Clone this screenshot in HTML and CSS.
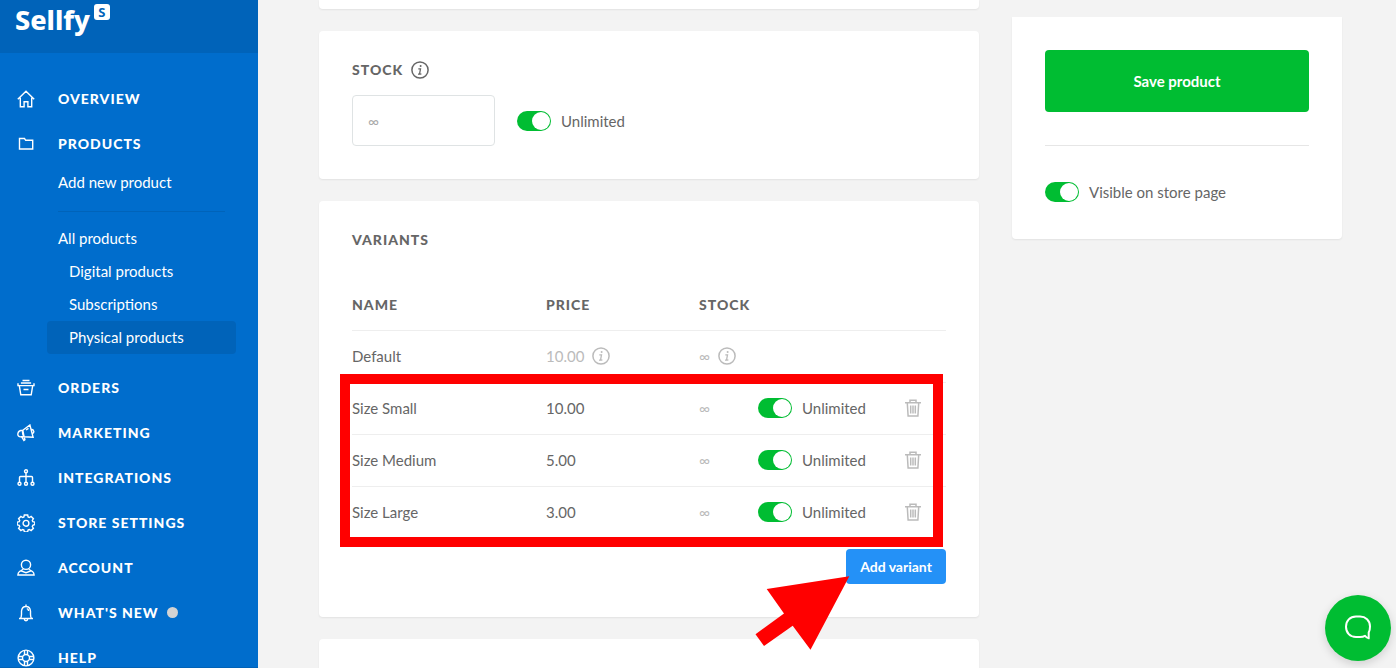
FILE: index.html
```html
<!DOCTYPE html>
<html lang="en">
<head>
<meta charset="utf-8">
<title>Sellfy – Physical products</title>
<link rel="stylesheet" href="styles.css">
</head>
<body>
<svg class="defs" aria-hidden="true">
  <symbol id="info" viewBox="0 0 18 18">
    <circle cx="9" cy="9" r="8.1" fill="none" stroke="currentColor" stroke-width="1.5"/>
    <circle cx="9.6" cy="5" r="1" fill="currentColor"/>
    <path d="M7.3 7.9h2.2L8.6 12.6q-.1.7.6.6l1.2-.3M7 13.1h1.8" fill="none" stroke="currentColor" stroke-width="1.3"/>
  </symbol>
  <symbol id="trash" viewBox="0 0 16 18">
    <path d="M0 3.700h16M5 3.400V1.200h6v2.200M2.300 4l.8 13h9.800l.8-13M5.700 6.500v8M8 6.500v8M10.300 6.500v8" fill="none" stroke="currentColor" stroke-width="1.5"/>
  </symbol>
</svg>
<div class="app">
  <aside class="sidebar">
    <header class="brand">
      <a class="logo" href="#"><span class="logo-word">Sellfy</span><span class="logo-badge">S</span></a>
    </header>
    <nav class="nav">
      <a class="nav-item" href="#"><svg class="icon" viewBox="0 0 18 18"><path d="M.8 9.300 9 1.200l8.200 8.100M3.300 7.800v9h3.800v-5h3.800v5h3.800v-9"/></svg>Overview</a>
      <a class="nav-item" href="#"><svg class="icon" viewBox="0 0 18 18"><path d="M2.500 14V3.500h5l1.200 1.800h7V14z"/></svg>Products</a>
      <div class="subnav">
        <a class="sub-item" href="#">Add new product</a>
        <hr class="sub-rule">
        <a class="sub-item" href="#">All products</a>
        <a class="sub-item sub-item-nested" href="#">Digital products</a>
        <a class="sub-item sub-item-nested" href="#">Subscriptions</a>
        <a class="sub-item sub-item-nested sub-item-active" href="#">Physical products</a>
      </div>
      <a class="nav-item" href="#"><svg class="icon" viewBox="0 0 18 18"><path d="M5.500 1.500h7M3.900 4h10.200M1 4.300v2.300h16V4.300M2.300 6.600l1.500 9.200h10.400l1.500-9.200M6.500 10.500h5"/></svg>Orders</a>
      <a class="nav-item" href="#"><svg class="icon" viewBox="0 0 18 18"><path d="M5.800 6.200 12.900 1l3.200 12.300-9-.5zM5.800 6.200C-.5 6.300-.5 13.300 4 12.800l3.100 0M5.800 6.200q-1 3.500 1.300 6.600M4.700 12.900l2.200 3.600 1-.8-.7-2.700M14.300 5.300c3 .2 3.300 3.600 1 4.300M9 6l2.500-1.600"/></svg>Marketing</a>
      <a class="nav-item" href="#"><svg class="icon" viewBox="0 0 18 18"><circle cx="9" cy="2.300" r="1.500"/><path d="M9 3.800v9.400M2.500 13.200V8.500q0-1 1-1h11q1 0 1 1v4.700"/><circle cx="2.500" cy="14.800" r="1.500"/><circle cx="9" cy="14.800" r="1.500"/><circle cx="15.500" cy="14.800" r="1.500"/></svg>Integrations</a>
      <a class="nav-item" href="#"><svg class="icon" viewBox="0 0 18 18"><path d="M7.300 1h3.400l.4 2 1.200.5 1.800-1.100 2.300 2.300-1.100 1.800.5 1.200 2 .4v2.400l-2 .8-.5 1.200 1.100 1.800-2.300 2.300-1.800-1.100-1.200.5-.5 1.900H7.400l-.5-1.900-1.200-.5-1.800 1.100-2.300-2.300 1.100-1.800-.5-1.200-2-.4V8.100l2-.4.5-1.200-1.100-1.800 2.300-2.300 1.800 1.100L6.900 3z"/><circle cx="9" cy="9.300" r="2.900"/></svg>Store settings</a>
      <a class="nav-item" href="#"><svg class="icon" viewBox="0 0 18 18"><circle cx="9" cy="5.800" r="4.600"/><path d="M6.300 10.300 2.500 12.500Q.9 13.500.9 16h16.200q0-2.500-1.600-3.500l-3.800-2.200M4 11.800l5 1.900 5-1.900"/></svg>Account</a>
      <a class="nav-item" href="#"><svg class="icon" viewBox="0 0 18 18"><path d="M9 .5v2M2 14.500h14M3.300 14.500q1.200-1 1.200-4V7Q5 2.500 9 2.500T13.500 7v3.500q0 3 1.200 4M7.200 14.700q.2 2 1.800 2t1.800-2M9.800 4.600q1.700.4 1.800 2.400"/></svg>What's new<span class="dot"></span></a>
      <a class="nav-item" href="#"><svg class="icon" viewBox="0 0 18 18"><circle cx="9" cy="9" r="7.900"/><circle cx="9" cy="9" r="3.500"/><path d="M7.500 1.300v4.500M10.500 1.300v4.500M7.500 12.200v4.500M10.500 12.200v4.500M1.300 7.500h4.500M1.300 10.500h4.500M12.200 7.500h4.500M12.200 10.500h4.500"/></svg>Help</a>
    </nav>
  </aside>

  <main class="content">
    <div class="column">
      <section class="card card-end"></section>

      <section class="card">
        <h2 class="heading">Stock <svg class="info"><use href="#info"/></svg></h2>
        <div class="stock-row">
          <input class="stock-input" type="text" placeholder="∞" aria-label="Stock">
          <label class="switch-label"><input class="switch" type="checkbox" checked>Unlimited</label>
        </div>
      </section>

      <section class="card variants">
        <h2 class="heading">Variants</h2>
        <table class="table">
          <colgroup><col class="col-name"><col class="col-price"><col class="col-stock"><col class="col-switch"><col></colgroup>
          <thead><tr><th>Name</th><th>Price</th><th>Stock</th><th></th><th></th></tr></thead>
          <tbody>
            <tr><td>Default</td><td class="muted"><span class="with-info">10.00 <svg class="info"><use href="#info"/></svg></span></td><td class="muted" colspan="3"><span class="with-info">∞ <svg class="info"><use href="#info"/></svg></span></td></tr>
            <tr><td>Size Small</td><td>10.00</td><td class="muted">∞</td><td><label class="switch-label"><input class="switch" type="checkbox" checked>Unlimited</label></td><td><button class="delete" type="button" aria-label="Delete Size Small"><svg class="trash"><use href="#trash"/></svg></button></td></tr>
            <tr><td>Size Medium</td><td>5.00</td><td class="muted">∞</td><td><label class="switch-label"><input class="switch" type="checkbox" checked>Unlimited</label></td><td><button class="delete" type="button" aria-label="Delete Size Medium"><svg class="trash"><use href="#trash"/></svg></button></td></tr>
            <tr><td>Size Large</td><td>3.00</td><td class="muted">∞</td><td><label class="switch-label"><input class="switch" type="checkbox" checked>Unlimited</label></td><td><button class="delete" type="button" aria-label="Delete Size Large"><svg class="trash"><use href="#trash"/></svg></button></td></tr>
          </tbody>
        </table>
        <div class="actions">
          <button class="button button-blue" type="button">Add variant</button>
          <svg class="arrow" viewBox="0 0 95 74" aria-hidden="true"><path d="M94.300.3 11.700 13 29 37.500.5 58.300 9 70l28.700-20.300 17.800 24z"/></svg>
        </div>
        <div class="highlight"></div>
      </section>

      <section class="card card-start"></section>
    </div>

    <aside class="card save-panel">
      <button class="button button-green" type="button">Save product</button>
      <hr class="rule">
      <label class="switch-label"><input class="switch" type="checkbox" checked>Visible on store page</label>
    </aside>
  </main>
</div>
<button class="chat" type="button" aria-label="Open chat"><svg class="chat-icon" viewBox="0 0 28 28"><path d="M26 12.500C26 6.300 21.500 2.500 16 2.500h-4C6 2.500 2 6.800 2 12.800S6 23 12 23h4q3 0 5-1.200 1.500 2.200 3.700 2.500v-5.800Q26 16 26 12.500z"/></svg></button>
</body>
</html>
```
FILE: styles.css
```css
* { box-sizing: border-box; }

body {
  margin: 0;
  background: #f3f3f3;
  color: #666;
  font: 15px/20px Lato, "Open Sans", sans-serif;
}

a { color: inherit; text-decoration: none; }
button, input { font: inherit; }
.defs { position: absolute; width: 0; height: 0; }

.app { display: flex; height: 100vh; overflow: hidden; }

/* Sidebar */
.sidebar {
  flex: 0 0 258px;
  overflow: hidden;
  background: #006dcc;
  border-bottom: 1px solid #0062b7;
  color: #fff;
}
.brand { height: 53px; padding: 0 15px; background: #0063b9; }
.logo { display: flex; gap: 4px; padding-top: 4px; }
.logo-word { font: 800 27px/32px "Noto Sans", sans-serif; }
.logo-badge {
  width: 16px;
  height: 16px;
  border-radius: 3px;
  background: #fff;
  color: #0063b9;
  font: 700 13px/16px "Noto Sans", sans-serif;
  text-align: center;
}
.nav { padding-top: 23px; }
.nav-item {
  display: flex;
  align-items: center;
  height: 45px;
  padding-left: 17px;
  font-size: 14px;
  font-weight: 900;
  letter-spacing: 1px;
  text-transform: uppercase;
}
.icon {
  width: 18px;
  height: 18px;
  margin-right: 23px;
  fill: none;
  stroke: #fff;
  stroke-width: 1.4;
}
.dot { width: 11px; height: 11px; margin-left: 8px; border-radius: 50%; background: #d3d3d3; }
.subnav { padding: 0 22px 11px 47px; }
.sub-item { display: block; padding: 6px 11px 7px; border-radius: 4px; }
.sub-item-nested { padding-left: 22px; }
.sub-item-active { background: #0063b9; }
.sub-rule { height: 1px; margin: 12px 11px 10px; border: 0; background: #0063b9; }

/* Content */
.content {
  flex: 1;
  display: grid;
  grid-template-columns: 2fr 1fr;
  align-items: start;
  column-gap: 33px;
  padding: 0 54px 0 61px;
}
.column { display: grid; gap: 22px; }
.card {
  padding: 29px 33px 33px;
  border-radius: 4px;
  background: #fff;
  box-shadow: 0 1px 2px rgba(0, 0, 0, 0.07);
}
.card-end { padding: 0 0 9px; border-radius: 0 0 4px 4px; }
.card-start { min-height: 60px; }
.heading, .table th {
  font-size: 14px;
  font-weight: 900;
  letter-spacing: 1px;
  text-transform: uppercase;
}
.heading { display: flex; align-items: center; gap: 8px; margin: 0; }
.info { width: 18px; height: 18px; }

.stock-row { display: flex; align-items: center; gap: 22px; margin-top: 15px; }
.stock-input {
  width: 143px;
  height: 51px;
  padding: 0 15px;
  border: 1px solid #dfe3e4;
  border-radius: 4px;
}
.stock-input::placeholder { color: #aaa; }

.switch-label { display: flex; align-items: center; gap: 10px; }
.switch {
  appearance: none;
  width: 34px;
  height: 20px;
  margin: 0;
  padding: 1px;
  border-radius: 10px;
  background: #bbb;
}
.switch::before {
  content: "";
  display: block;
  width: 18px;
  height: 18px;
  border-radius: 50%;
  background: #fff;
}
.switch:checked { background: #00bd32; }
.switch:checked::before { margin-left: auto; }

/* Variants */
.variants { position: relative; }
.table {
  width: 100%;
  margin-top: 31px;
  border-collapse: collapse;
  table-layout: fixed;
}
.table th, .table td { height: 52px; padding: 0; border-bottom: 1px solid #eee; text-align: left; }
.table th { height: 49px; }
.table tr:last-child td { border-bottom: 0; }
.col-name { width: 194px; }
.col-price { width: 153px; }
.col-stock { width: 59px; }
.col-switch { width: 147px; }
.table .muted { color: #bbb; }
.with-info { display: flex; align-items: center; gap: 8px; }
.delete { display: block; padding: 0; border: 0; background: none; color: #bbb; }
.trash { display: block; width: 16px; height: 18px; }

.actions { position: relative; display: flex; justify-content: flex-end; margin-top: 11px; }
.button { border: 0; border-radius: 4px; color: #fff; font-weight: 700; }
.button-blue { width: 100px; height: 35px; background: #2491f7; font-size: 14px; }
.button-green { width: 100%; height: 62px; background: #00bd32; }
.arrow { position: absolute; top: 27px; right: 96px; width: 95px; height: 74px; fill: #f00; }
.highlight {
  position: absolute;
  top: 173px;
  right: 36px;
  left: 21px;
  height: 173px;
  border: 10px solid #f00;
  pointer-events: none;
}

/* Save panel */
.save-panel { margin-top: 17px; padding: 33px; border-radius: 0 0 4px 4px; }
.rule { height: 1px; margin: 33px 0 32px; border: 0; background: #e6e6e6; }
.save-panel .switch-label { min-height: 28px; }

.chat {
  position: fixed;
  right: 5px;
  bottom: 7px;
  display: grid;
  place-items: center;
  width: 66px;
  height: 66px;
  padding: 0;
  border: 0;
  border-radius: 50%;
  background: #00bd32;
  box-shadow: 0 3px 10px rgba(0, 0, 0, 0.15);
}
.chat-icon { width: 28px; height: 28px; fill: none; stroke: #fff; stroke-width: 2; stroke-linejoin: round; }
```
